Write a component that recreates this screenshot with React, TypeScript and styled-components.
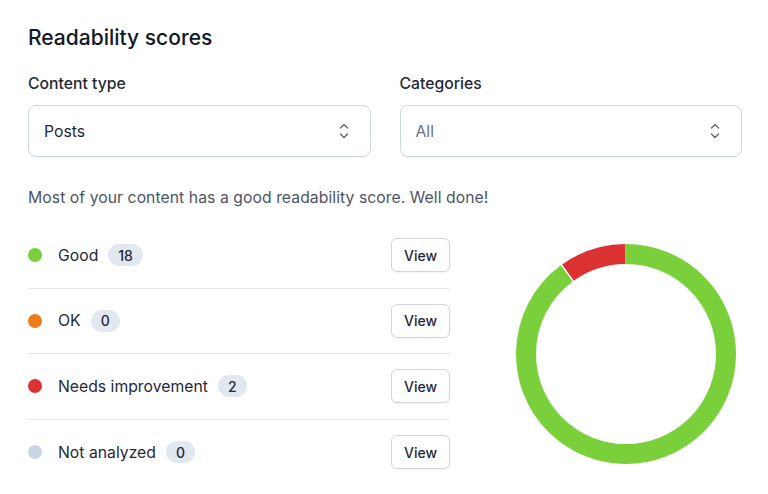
import React from "react";
import styled, { createGlobalStyle } from "styled-components";

const GlobalStyle = createGlobalStyle`
  * { box-sizing: border-box; }
  body {
    margin: 0;
    background: #fff;
    font-family: Inter, "Noto Sans", "Liberation Sans", sans-serif;
    color: #1e293b;
  }
`;

const Page = styled.div`
  width: 768px;
  padding: 22px 26px 0 28px;
`;

const Title = styled.h2`
  margin: 0;
  font-size: 21px;
  line-height: 32px;
  font-weight: 500;
  color: #111827;
`;

const Filters = styled.div`
  display: grid;
  grid-template-columns: 1fr 1fr;
  gap: 29px;
  margin-top: 18px;
`;

const Field = styled.div`
  display: flex;
  flex-direction: column;
`;

const Label = styled.label`
  font-size: 15.75px;
  line-height: 24px;
  font-weight: 470;
  color: #1f2937;
  margin-bottom: 9px;
`;

const Select = styled.div<{ $placeholder?: boolean }>`
  height: 52px;
  border: 1px solid #cfd6e0;
  border-radius: 8px;
  display: flex;
  align-items: center;
  justify-content: space-between;
  padding: 0 20px 0 15px;
  font-size: 15.75px;
  color: ${(p) => (p.$placeholder ? "#6b7280" : "#1f2937")};
  box-shadow: 0 1px 2px rgba(15, 23, 42, 0.04);
`;

const Message = styled.p`
  margin: 29px 0 0 0;
  font-size: 15.75px;
  line-height: 24px;
  color: #4b5563;
  letter-spacing: 0.05px;
`;

const Body = styled.div`
  display: flex;
  align-items: center;
  margin-top: 13px;
`;

const List = styled.ul`
  list-style: none;
  margin: 0;
  padding: 0;
  width: 422px;
`;

const Row = styled.li`
  height: 65.5px;
  display: flex;
  align-items: center;
  border-bottom: 1px solid #e5e7eb;
  &:last-child {
    border-bottom: none;
  }
`;

const Dot = styled.span<{ $color: string }>`
  width: 14px;
  height: 14px;
  border-radius: 50%;
  background: ${(p) => p.$color};
  margin-right: 16px;
  flex-shrink: 0;
`;

const RowLabel = styled.span`
  font-size: 15.75px;
  color: #1f2937;
  font-weight: 430;
`;

const Badge = styled.span`
  margin-left: 10px;
  height: 22px;
  min-width: 29px;
  padding: 0 10px;
  border-radius: 11px;
  background: #e2e8f0;
  display: inline-flex;
  align-items: center;
  justify-content: center;
  font-size: 14px;
  font-weight: 500;
  color: #1f2937;
`;

const ViewButton = styled.button`
  margin-left: auto;
  width: 59px;
  height: 34px;
  border: 1px solid #d1d5db;
  border-radius: 6px;
  background: #fff;
  font-family: inherit;
  font-size: 14px;
  font-weight: 470;
  color: #1f2937;
  box-shadow: 0 1px 2px rgba(15, 23, 42, 0.05);
  cursor: pointer;
`;

const ChartWrap = styled.div`
  flex: 1;
  display: flex;
  justify-content: center;
  padding-left: 59px;
`;

const Chevrons = () => (
  <svg width="12" height="18" viewBox="0 0 12 18" fill="none">
    <path d="M2.5 6 L6 2.5 L9.5 6" stroke="#6b7280" strokeWidth="1.6" strokeLinecap="round" strokeLinejoin="round" />
    <path d="M2.5 12 L6 15.5 L9.5 12" stroke="#6b7280" strokeWidth="1.6" strokeLinecap="round" strokeLinejoin="round" />
  </svg>
);

const scores = [
  { label: "Good", count: 18, color: "#7ad03a" },
  { label: "OK", count: 0, color: "#ee7c1b" },
  { label: "Needs improvement", count: 2, color: "#dc3232" },
  { label: "Not analyzed", count: 0, color: "#cbd5e1" },
];

const Donut = () => {
  const r = 100;
  const c = 2 * Math.PI * r;
  const total = scores.reduce((s, x) => s + x.count, 0);
  const gap = 1.5;
  let offset = 0;
  return (
    <svg width="220" height="220" viewBox="0 0 220 220">
      <g transform="rotate(-90 110 110)">
        {scores
          .filter((s) => s.count > 0)
          .map((s) => {
            const len = (s.count / total) * c;
            const el = (
              <circle
                key={s.label}
                cx="110"
                cy="110"
                r={r}
                fill="none"
                stroke={s.color}
                strokeWidth="20"
                strokeDasharray={`${len - gap} ${c - len + gap}`}
                strokeDashoffset={-offset}
              />
            );
            offset += len;
            return el;
          })}
      </g>
    </svg>
  );
};

export default function App() {
  return (
    <>
      <GlobalStyle />
      <Page>
        <Title>Readability scores</Title>
        <Filters>
          <Field>
            <Label>Content type</Label>
            <Select>
              Posts
              <Chevrons />
            </Select>
          </Field>
          <Field>
            <Label>Categories</Label>
            <Select $placeholder>
              All
              <Chevrons />
            </Select>
          </Field>
        </Filters>
        <Message>Most of your content has a good readability score. Well done!</Message>
        <Body>
          <List>
            {scores.map((s) => (
              <Row key={s.label}>
                <Dot $color={s.color} />
                <RowLabel>{s.label}</RowLabel>
                <Badge>{s.count}</Badge>
                <ViewButton>View</ViewButton>
              </Row>
            ))}
          </List>
          <ChartWrap>
            <Donut />
          </ChartWrap>
        </Body>
      </Page>
    </>
  );
}
